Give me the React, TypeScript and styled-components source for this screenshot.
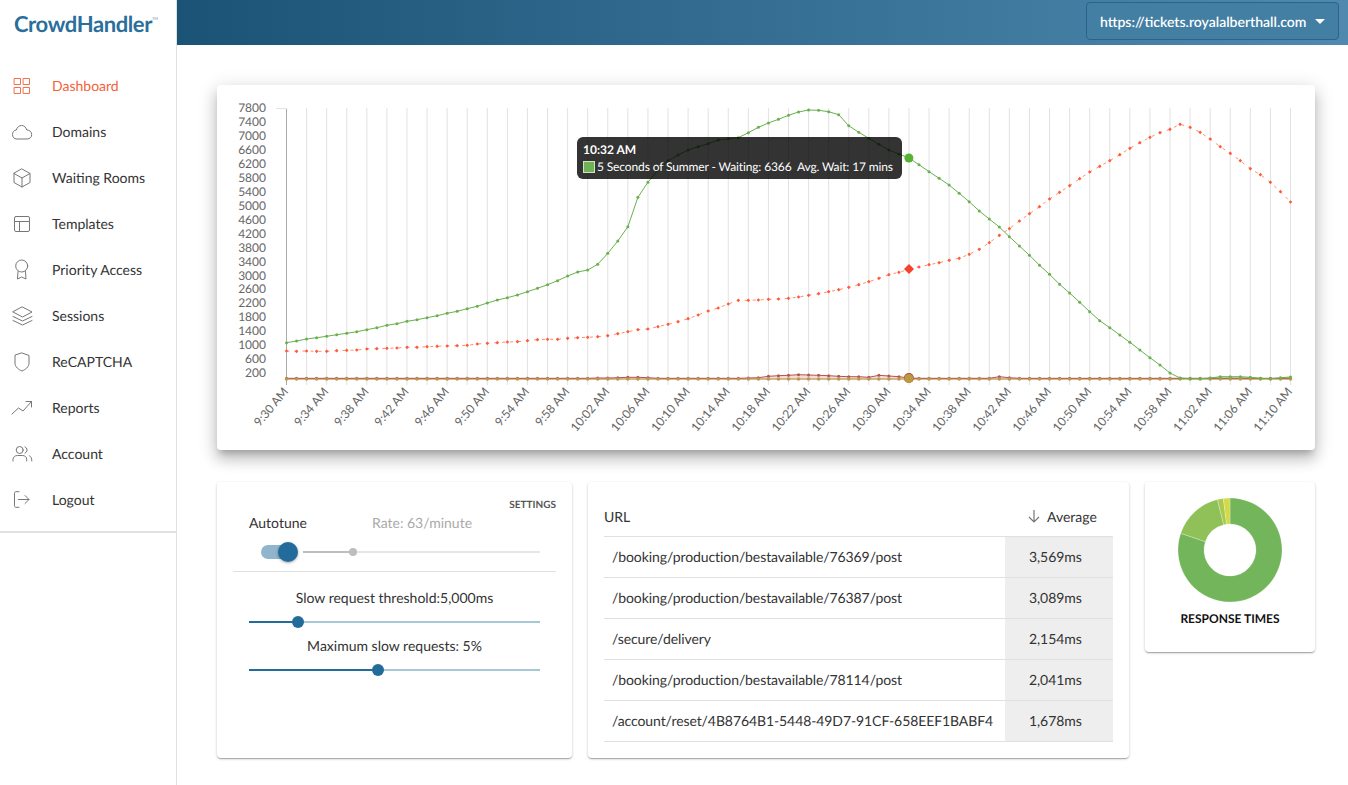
import React from "react";
import styled, { createGlobalStyle } from "styled-components";

const Global = createGlobalStyle`
  html, body { margin: 0; padding: 0; background: #fff; }
  body { font-family: Lato, "Open Sans", sans-serif; color: #333; font-size: 14px; text-rendering: geometricPrecision; }
  * { box-sizing: border-box; }
`;

const Page = styled.div`
  display: flex;
  min-height: 785px;
  height: 785px;
  overflow: hidden;
`;
const Sidebar = styled.aside`
  width: 177px;
  flex: none;
  border-right: 1px solid #e0e0e0;
`;
const LogoBar = styled.div`
  height: 63px;
  padding: 11px 0 0 14px;
`;
const Logo = styled.div`
  font-family: Lato, sans-serif;
  font-weight: 700;
  font-size: 22px;
  line-height: 26px;
  letter-spacing: -0.4px;
  color: #2a6e9b;
  white-space: nowrap;
  sup {
    font-size: 4px;
    font-weight: 400;
    letter-spacing: 0;
    vertical-align: 12px;
    line-height: 0;
    color: #6f8d9f;
  }
`;
const Nav = styled.nav`
  padding-bottom: 8px;
  border-bottom: 2px solid #e0e0e0;
`;
const NavItem = styled.div<{ $active?: boolean }>`
  height: 46px;
  display: flex;
  align-items: center;
  gap: 18px;
  padding-left: 10px;
  font-size: 14px;
  color: ${(p) => (p.$active ? "#f4623a" : "#333")};
`;
const NavLabel = styled.span`
  margin-bottom: 2px;
`;
const NavIcon = styled.svg`
  width: 24px;
  height: 24px;
  flex: none;
  fill: none;
  stroke-width: 1;
  stroke-linecap: round;
  stroke-linejoin: round;
`;
const Content = styled.div`
  flex: 1;
  min-width: 0;
  display: flex;
  flex-direction: column;
`;
const Header = styled.header`
  height: 45px;
  flex: none;
  display: flex;
  justify-content: flex-end;
  align-items: flex-start;
  padding: 2px 9px 0 0;
  background: linear-gradient(90deg, #1b5376 0%, #4f89af 100%);
`;
const DomainSelect = styled.div`
  width: 253px;
  height: 38px;
  display: flex;
  align-items: center;
  justify-content: space-between;
  padding: 0 13px 0 13px;
  border: 1px solid #2c6488;
  border-radius: 4px;
  background: #437ea3;
  color: #fff;
  font-size: 14px;
  font-weight: 600;
`;
const Caret = styled.span`
  width: 0;
  height: 0;
  border-left: 5px solid transparent;
  border-right: 5px solid transparent;
  border-top: 5px solid #fff;
`;
const Main = styled.main`
  padding: 40px 33px 0 40px;
  display: flex;
  flex-direction: column;
  gap: 32px;
`;
const ChartCard = styled.section`
  position: relative;
  height: 365px;
  border-radius: 4px;
  background: #fff;
  box-shadow: 0 6px 6px -3px rgba(0, 0, 0, 0.2), 0 10px 14px 1px rgba(0, 0, 0, 0.14), 0 4px 18px 3px rgba(0, 0, 0, 0.12);
`;
const ChartSvg = styled.svg`
  display: block;
  width: 1098px;
  height: 365px;
`;
const AxisLabel = styled.text`
  font-family: Lato, sans-serif;
  font-size: 12px;
  fill: #666;
`;
const Tooltip = styled.div`
  position: absolute;
  left: 360px;
  top: 52px;
  width: 325px;
  height: 42px;
  padding: 6px;
  border-radius: 6px;
  background: rgba(0, 0, 0, 0.8);
  color: #fff;
  font-size: 12px;
  line-height: 14px;
  white-space: pre;
`;
const TooltipTitle = styled.div`
  font-weight: 700;
  margin-bottom: 3px;
`;
const TooltipBody = styled.div`
  display: flex;
  align-items: center;
  gap: 2px;
  letter-spacing: -0.13px;
`;
const Swatch = styled.span`
  width: 12px;
  height: 12px;
  flex: none;
  background: #6fb356;
  border: 1px solid #cfe3c5;
`;
const Row = styled.div`
  display: flex;
  gap: 16px;
`;
const Card = styled.section`
  border-radius: 4px;
  background: #fff;
  box-shadow: 0 1px 3px rgba(0, 0, 0, 0.2), 0 1px 1px rgba(0, 0, 0, 0.14), 0 2px 1px -1px rgba(0, 0, 0, 0.12);
`;
const SettingsCard = styled(Card)`
  width: 355px;
  height: 276px;
  padding: 16px 16px 0;
`;
const SettingsTitle = styled.div`
  text-align: right;
  font-size: 10px;
  font-weight: 700;
  line-height: 14px;
  color: #555;
`;
const AutotuneRow = styled.div`
  display: flex;
  margin-top: 1px;
  padding-left: 16px;
  line-height: 20px;
`;
const AutotuneLabel = styled.span`
  width: 123px;
`;
const RateLabel = styled.span`
  color: #aaa;
`;
const ControlRow = styled.div`
  display: flex;
  align-items: center;
  gap: 6px;
  height: 24px;
  margin-top: 7px;
  padding: 0 16px 0 28px;
`;
const Switch = styled.div`
  position: relative;
  width: 36px;
  height: 14px;
  flex: none;
  border-radius: 7px;
  background: #91b5cc;
`;
const SwitchThumb = styled.span`
  position: absolute;
  right: -1px;
  top: -3px;
  width: 20px;
  height: 20px;
  border-radius: 50%;
  background: #236b9a;
  box-shadow: 0 1px 3px rgba(0, 0, 0, 0.35);
`;
const Divider = styled.hr`
  margin: 7px 0 0;
  border: 0;
  border-top: 1px solid #e0e0e0;
`;
const SliderLabel = styled.div<{ $first?: boolean }>`
  margin-top: ${(p) => (p.$first ? 16 : 6)}px;
  text-align: center;
  line-height: 20px;
  color: #333;
`;
const SliderBox = styled.div`
  height: 16px;
  margin: 6px 16px 0;
  display: flex;
  align-items: center;
`;
const Track = styled.div<{ $disabled?: boolean }>`
  position: relative;
  flex: 1;
  height: 2px;
  background: ${(p) => (p.$disabled ? "#e6e6e6" : "#a6c7d8")};
`;
const TrackFill = styled.div<{ $pct: number; $disabled?: boolean }>`
  height: 2px;
  width: ${(p) => p.$pct}%;
  background: ${(p) => (p.$disabled ? "#bdbdbd" : "#236b9a")};
`;
const Thumb = styled.span<{ $pct: number; $disabled?: boolean }>`
  position: absolute;
  top: 50%;
  left: ${(p) => p.$pct}%;
  width: ${(p) => (p.$disabled ? 8 : 12)}px;
  height: ${(p) => (p.$disabled ? 8 : 12)}px;
  transform: translate(-50%, -50%);
  border-radius: 50%;
  background: ${(p) => (p.$disabled ? "#bdbdbd" : "#236b9a")};
`;
const TableCard = styled(Card)`
  width: 541px;
  height: 276px;
  padding: 16px;
`;
const Table = styled.table`
  width: 509px;
  border-collapse: collapse;
  table-layout: fixed;
  font-size: 14px;
`;
const HeadCell = styled.th<{ $narrow?: boolean }>`
  height: 38px;
  padding: 0 0 0 ${(p) => (p.$narrow ? 22 : 0)}px;
  width: ${(p) => (p.$narrow ? "108px" : "auto")};
  text-align: left;
  font-weight: 400;
  color: #333;
  border-bottom: 1px solid #e0e0e0;
`;
const SortLabel = styled.span`
  display: inline-flex;
  align-items: center;
  gap: 6px;
`;
const SortIcon = styled.svg`
  width: 14px;
  height: 14px;
  fill: none;
  stroke: #777;
  stroke-width: 1.2;
`;
const Cell = styled.td`
  height: 41px;
  padding: 0 0 0 8px;
  color: #333;
  white-space: nowrap;
  letter-spacing: -0.09px;
  border-bottom: 1px solid #e0e0e0;
`;
const ValueCell = styled(Cell)`
  padding-left: 24px;
  background: #eee;
`;
const DonutCard = styled(Card)`
  width: 170px;
  height: 170px;
  display: flex;
  flex-direction: column;
  align-items: center;
  padding-top: 16px;
`;
const DonutSvg = styled.svg`
  display: block;
  width: 104px;
  height: 104px;
`;
const DonutTitle = styled.div`
  margin-top: 10px;
  font-size: 12px;
  line-height: 14px;
  font-weight: 700;
  color: #111;
`;

const GREEN = [758,753,747,743,739,734,730,725,719,713,706,701,694,689,683,677,670,664,656,649,639,630,623,615,605,595,584,572,558,546,540,523,490,453,410,322,277,240,212,195,180,170,161,150,146,143,128,112,99,88,76,66,60,61,65,74,107,127,145,163,180,192,204,224,245,265,285,310,335,363,387,411,440,468,496,526,553,583,609,637,665,692,713,735,757,780,803,825,849,864,866,866,864,860,860,860,862,865,866,863,861];
const ORANGE = [783,784,783,784,784,782,781,780,777,776,775,774,772,772,770,769,768,767,766,762,760,758,756,755,752,749,748,748,745,743,742,740,737,731,725,719,717,710,703,695,686,675,663,654,642,631,631,630,628,627,625,621,616,611,605,599,592,584,575,565,554,547,538,531,524,518,511,505,493,478,458,436,416,393,371,350,327,307,287,266,246,229,212,194,175,158,142,128,118,103,112,127,147,170,190,212,236,254,277,305,336];
const RED_BUMPS: Record<number, number> = { 46: 864, 47: 863, 48: 859, 49: 857, 50: 856, 51: 854, 52: 855, 53: 856, 54: 857, 55: 859, 56: 860, 57: 860, 58: 862, 59: 856, 60: 858, 61: 860, 62: 864, 31: 864, 32: 864, 33: 863, 34: 862, 35: 862, 36: 863, 71: 860, 72: 863 };
const RED = GREEN.map((_, i) => RED_BUMPS[i] ?? 865);
const TAN = GREEN.map(() => 867);

const px = (i: number) => 286.5 + 10.04 * i;
const py = (z: number) => 90 + z / 3;
const points = (d: number[]) => d.map((z, i) => `${px(i).toFixed(1)},${py(z).toFixed(1)}`).join(" ");

const yTicks = Array.from({ length: 20 }, (_, k) => 7800 - 400 * k);
const timeLabel = (i: number) => {
  const total = 9 * 60 + 30 + i;
  const h = Math.floor(total / 60);
  const m = total % 60;
  return `${h}:${String(m).padStart(2, "0")} AM`;
};

function Chart() {
  const tail = GREEN.map((z, i) => (i >= 89 ? `${px(i).toFixed(1)},${py(z).toFixed(1)}` : "")).filter(Boolean);
  return (
    <ChartSvg viewBox="217 85 1098 365">
      {Array.from({ length: 51 }, (_, k) => (
        <line key={k} x1={px(k * 2)} x2={px(k * 2)} y1={108} y2={385} stroke={k === 0 ? "#aaa" : "#e2e2e2"} strokeWidth={1} />
      ))}
      <line x1={276} x2={287} y1={108.5} y2={108.5} stroke="#e2e2e2" />
      {yTicks.map((v, k) => (
        <AxisLabel key={v} x={266} y={108.2 + k * 13.93 + 4.2} textAnchor="end">{v}</AxisLabel>
      ))}
      {Array.from({ length: 26 }, (_, k) => (
        <AxisLabel key={k} textAnchor="end" transform={`translate(${px(k * 4) + 2.5} 392) rotate(-50)`}>{timeLabel(k * 4)}</AxisLabel>
      ))}
      <polygon points={`${px(89)},379 ${tail.join(" ")} ${px(100)},379`} fill="#6ab04f" fillOpacity={0.35} />
      <polygon points={`${px(0)},379.3 ${points(RED)} ${px(100)},379.3`} fill="#c0504d" fillOpacity={0.2} />
      <polyline points={points(TAN)} fill="none" stroke="#c9a96b" strokeWidth={1.6} />
      <polyline points={points(RED)} fill="none" stroke="#b5534f" strokeWidth={1} />
      {RED.map((z, i) => <circle key={i} cx={px(i)} cy={py(z)} r={1.5} fill="#b5534f" />)}
      {TAN.map((z, i) => <circle key={i} cx={px(i)} cy={py(z)} r={1.8} fill="#b89b50" />)}
      <polyline points={points(GREEN)} fill="none" stroke="#6ab04f" strokeWidth={1} />
      {GREEN.map((z, i) => <circle key={i} cx={px(i)} cy={py(z)} r={1.5} fill="#6ab04f" />)}
      <polyline points={points(ORANGE)} fill="none" stroke="#ff7a59" strokeOpacity={0.85} strokeWidth={1} strokeDasharray="3 5" />
      {ORANGE.map((z, i) => {
        const x = px(i);
        const y = py(z);
        return <polygon key={i} points={`${x},${y - 1.8} ${x + 1.8},${y} ${x},${y + 1.8} ${x - 1.8},${y}`} fill="#ff5a36" />;
      })}
      <circle cx={908.9} cy={158} r={4.5} fill="#55b233" />
      <polygon points="909,264 914,269 909,274 904,269" fill="#f4432c" />
      <circle cx={908.9} cy={378} r={5} fill="#b5453f" />
      <circle cx={908.9} cy={378.5} r={4.6} fill="#b89b3f" />
    </ChartSvg>
  );
}

const SEGMENTS = [
  { from: 0, to: 288.7, color: "#72b55a" },
  { from: 288.7, to: 346, color: "#8fc158" },
  { from: 346, to: 352.6, color: "#a9c94f" },
  { from: 352.6, to: 360, color: "#d3d948" },
];
function arc(from: number, to: number) {
  const pt = (a: number, r: number) => {
    const t = (a * Math.PI) / 180;
    return `${(52 + r * Math.sin(t)).toFixed(2)} ${(52 - r * Math.cos(t)).toFixed(2)}`;
  };
  const large = to - from > 180 ? 1 : 0;
  return `M${pt(from, 52)}A52 52 0 ${large} 1 ${pt(to, 52)}L${pt(to, 26)}A26 26 0 ${large} 0 ${pt(from, 26)}Z`;
}

const ROWS = [
  ["/booking/production/bestavailable/76369/post", "3,569ms"],
  ["/booking/production/bestavailable/76387/post", "3,089ms"],
  ["/secure/delivery", "2,154ms"],
  ["/booking/production/bestavailable/78114/post", "2,041ms"],
  ["/account/reset/4B8764B1-5448-49D7-91CF-658EEF1BABF4", "1,678ms"],
];

const NAV: { label: string; active?: boolean; icon: React.ReactNode }[] = [
  { label: "Dashboard", active: true, icon: (<><rect x="4.5" y="4.5" width="6" height="6" /><rect x="13.5" y="4.5" width="6" height="6" /><rect x="4.5" y="13.5" width="6" height="6" /><rect x="13.5" y="13.5" width="6" height="6" /></>) },
  { label: "Domains", icon: <path d="M6.5 19C4 19 2.5 17 2.5 14.5 2.5 12 4 10.3 6.3 10 7.2 7 9.3 5.5 11.5 5.5 14.2 5.5 16 7.3 16.7 10 19.8 10 21.7 12 21.7 14.5 21.7 17 20 19 17.5 19Z" /> },
  { label: "Waiting Rooms", icon: <path d="M12 3 20 7.5V16.5L12 21 4 16.5V7.5ZM4 7.5 12 12 20 7.5M12 12V21" /> },
  { label: "Templates", icon: (<><rect x="4.5" y="4.5" width="15" height="15" rx="1.5" /><path d="M4.5 9.5H19.5M9.5 9.5V19.5" /></>) },
  { label: "Priority Access", icon: (<><circle cx="11.7" cy="8" r="6" /><path d="M8 13.5 7.5 21 11.7 19 16 21 15.5 13.5" /></>) },
  { label: "Sessions", icon: <path d="M12.5 3 22 8 12.5 13 3 8ZM3 12.5 12.5 17 22 12.5M3 16.5 12.5 21 22 16.5" /> },
  { label: "ReCAPTCHA", icon: <path d="M12 3 19 5.5V13C19 17 15.5 19.5 12 21 8.5 19.5 5 17 5 13V5.5Z" /> },
  { label: "Reports", icon: <path d="M2 18 8.5 12 13 15 21.5 5.5M16 5.5H21.5V11" /> },
  { label: "Account", icon: (<><circle cx="9.7" cy="8" r="3.5" /><path d="M3 19V17.5C3 15 5 13.5 7.5 13.5H12.5C15 13.5 16.7 15 16.7 17.5V19M15 4.8A3.5 3.5 0 0 1 15 11.2M19.5 13.8C21 14.5 21.8 16 21.8 19" /></>) },
  { label: "Logout", icon: <path d="M9 3.7H6C5 3.7 4.5 4.2 4.5 5.2V17.8C4.5 18.8 5 19.3 6 19.3H9M8.5 11.5H19M15 7.5 19 11.5 15 15.5" /> },
];

function Slider({ pct, disabled }: { pct: number; disabled?: boolean }) {
  return (
    <Track $disabled={disabled}>
      <TrackFill $pct={pct} $disabled={disabled} />
      <Thumb $pct={pct} $disabled={disabled} />
    </Track>
  );
}

export default function App() {
  return (
    <Page>
      <Global />
      <Sidebar>
        <LogoBar>
          <Logo>CrowdHandler<sup>TM</sup></Logo>
        </LogoBar>
        <Nav>
          {NAV.map((n) => (
            <NavItem key={n.label} $active={n.active}>
              <NavIcon viewBox="0 0 24 24" stroke={n.active ? "#f5714b" : "#777"}>{n.icon}</NavIcon>
              <NavLabel>{n.label}</NavLabel>
            </NavItem>
          ))}
        </Nav>
      </Sidebar>
      <Content>
        <Header>
          <DomainSelect>
            https://tickets.royalalberthall.com
            <Caret />
          </DomainSelect>
        </Header>
        <Main>
          <ChartCard>
            <Chart />
            <Tooltip>
              <TooltipTitle>10:32 AM</TooltipTitle>
              <TooltipBody>
                <Swatch />
                <span>5 Seconds of Summer - Waiting: 6366  Avg. Wait: 17 mins</span>
              </TooltipBody>
            </Tooltip>
          </ChartCard>
          <Row>
            <SettingsCard>
              <SettingsTitle>SETTINGS</SettingsTitle>
              <AutotuneRow>
                <AutotuneLabel>Autotune</AutotuneLabel>
                <RateLabel>Rate: 63/minute</RateLabel>
              </AutotuneRow>
              <ControlRow>
                <Switch><SwitchThumb /></Switch>
                <Slider pct={21.1} disabled />
              </ControlRow>
              <Divider />
              <SliderLabel $first>Slow request threshold:5,000ms</SliderLabel>
              <SliderBox><Slider pct={16.8} /></SliderBox>
              <SliderLabel>Maximum slow requests: 5%</SliderLabel>
              <SliderBox><Slider pct={44.3} /></SliderBox>
            </SettingsCard>
            <TableCard>
              <Table>
                <thead>
                  <tr>
                    <HeadCell>URL</HeadCell>
                    <HeadCell $narrow>
                      <SortLabel>
                        <SortIcon viewBox="0 0 14 14"><path d="M7 1V13M2 8 7 13 12 8" /></SortIcon>
                        Average
                      </SortLabel>
                    </HeadCell>
                  </tr>
                </thead>
                <tbody>
                  {ROWS.map(([u, v]) => (
                    <tr key={u}>
                      <Cell>{u}</Cell>
                      <ValueCell>{v}</ValueCell>
                    </tr>
                  ))}
                </tbody>
              </Table>
            </TableCard>
            <DonutCard>
              <DonutSvg viewBox="0 0 104 104">
                {SEGMENTS.map((s) => (
                  <path key={s.from} d={arc(s.from, s.to)} fill={s.color} stroke="#fff" strokeOpacity={0.5} strokeWidth={0.5} />
                ))}
              </DonutSvg>
              <DonutTitle>RESPONSE TIMES</DonutTitle>
            </DonutCard>
          </Row>
        </Main>
      </Content>
    </Page>
  );
}
